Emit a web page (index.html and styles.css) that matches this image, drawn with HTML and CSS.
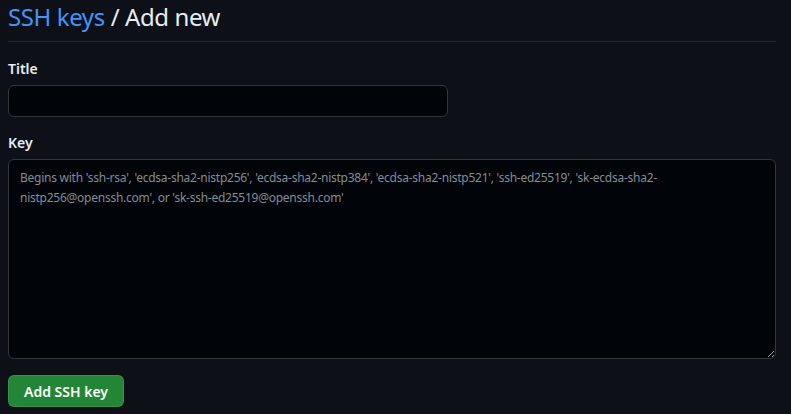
FILE: index.html
```
<!DOCTYPE html>
<html lang="en">
<head>
    <meta charset="UTF-8">
    <title>Add new SSH key</title>
    <link rel="stylesheet" href="styles.css">
</head>
<body>
    <div class="container">
        <div class="subhead">
            <h2><a href="#">SSH keys</a> / Add new</h2>
        </div>
        <form class="key-form">
            <div class="form-group">
                <label for="title">Title</label>
                <input type="text" id="title" class="form-control">
            </div>
            <div class="form-group">
                <label for="key">Key</label>
                <textarea id="key" class="form-control key-field" placeholder="Begins with 'ssh-rsa', 'ecdsa-sha2-nistp256', 'ecdsa-sha2-nistp384', 'ecdsa-sha2-nistp521', 'ssh-ed25519', 'sk-ecdsa-sha2-nistp256@openssh.com', or 'sk-ssh-ed25519@openssh.com'"></textarea>
            </div>
            <button type="button" class="btn-primary">Add SSH key</button>
        </form>
    </div>
</body>
</html>
```

FILE: styles.css
```
* {
    margin: 0;
    padding: 0;
    box-sizing: border-box;
    font-family: 'Noto Sans', 'Open Sans', sans-serif;
}

body {
    background: #0d1117;
    color: #e6edf3;
    padding: 0 15px 0 8px;
}

.container {
    width: 768px;
}

.subhead {
    border-bottom: 1px solid #21262d;
    padding: 0 0 8px;
    margin-bottom: 17px;
}

.subhead h2 {
    font-size: 24px;
    font-weight: 400;
    line-height: 33px;
    letter-spacing: -0.4px;
    color: #e6edf3;
}

.subhead a {
    color: #4493f8;
    text-decoration: none;
}

.form-group {
    margin-bottom: 16px;
}

.form-group label {
    display: block;
    font-size: 14px;
    font-weight: 600;
    line-height: 20px;
    margin: 0 0 6px;
}

.form-control {
    display: block;
    background: #010409;
    border: 1px solid #30363d;
    border-radius: 6px;
    color: #e6edf3;
    font-size: 14px;
    padding: 5px 12px;
    outline: none;
}

input.form-control {
    width: 440px;
    height: 32px;
}

.key-field {
    width: 768px;
    height: 200px;
    font-size: 12px;
    line-height: 20px;
    padding: 8px 11px;
    resize: vertical;
}

.key-field::placeholder {
    color: #848d97;
    letter-spacing: -0.25px;
}

.btn-primary {
    height: 32px;
    padding: 0 15px;
    background: #238636;
    border: 1px solid rgba(240, 246, 252, 0.1);
    border-radius: 6px;
    color: #ffffff;
    font-size: 14px;
    font-weight: 600;
    cursor: pointer;
}
```
